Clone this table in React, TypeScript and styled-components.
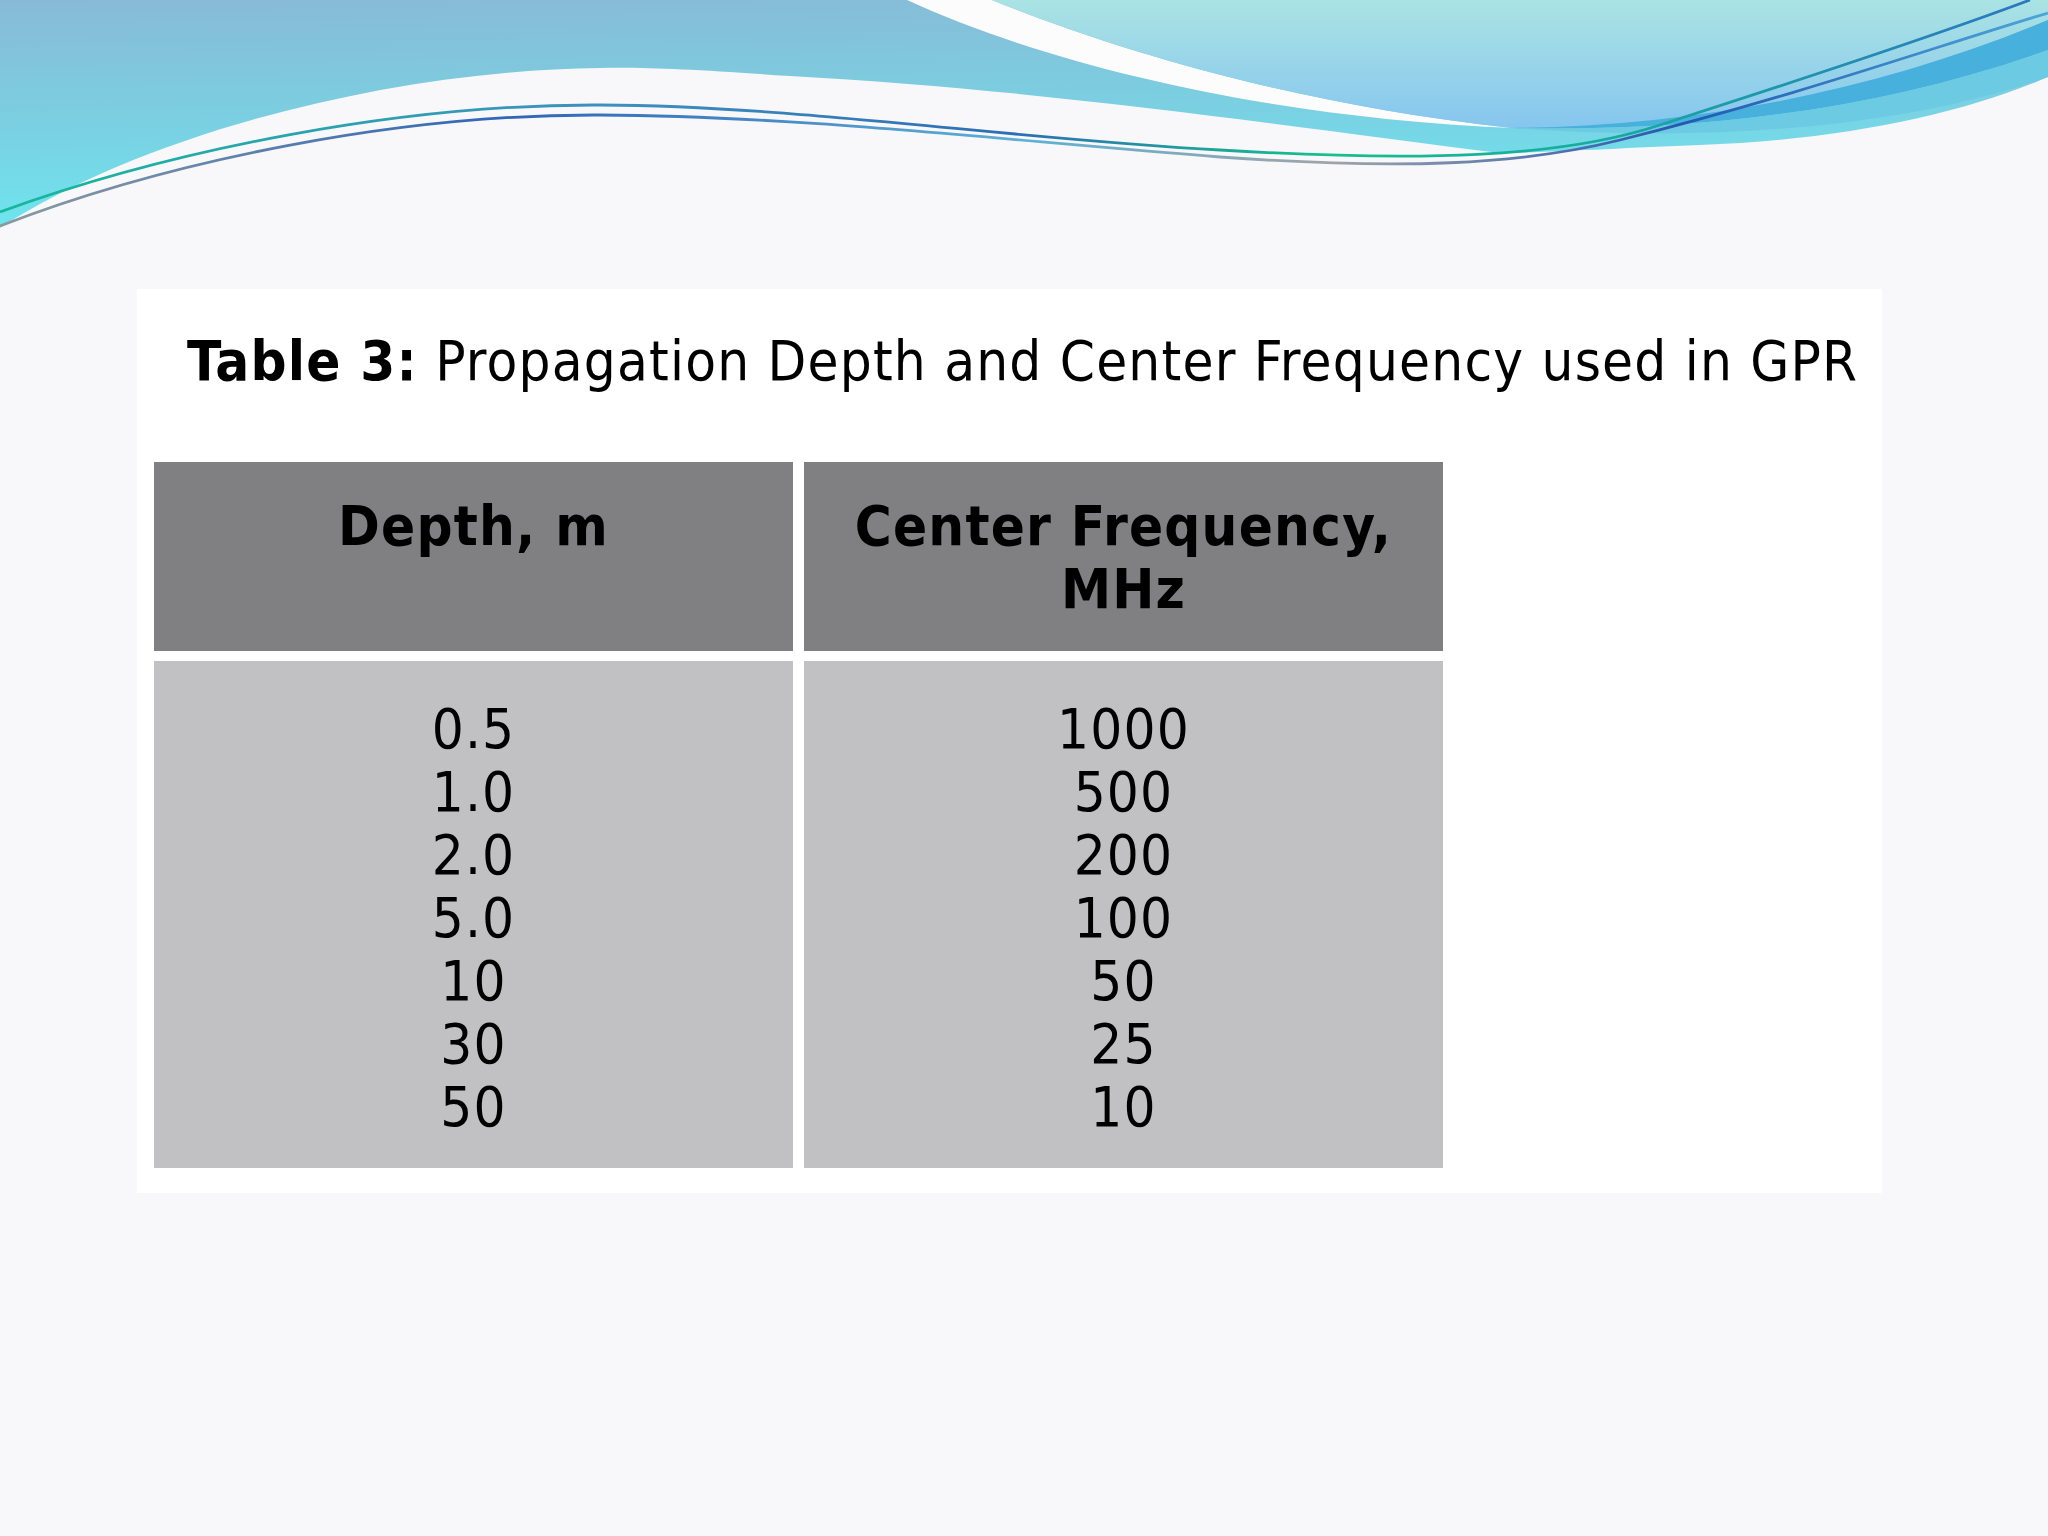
import styled, { createGlobalStyle } from "styled-components";

const GlobalStyle = createGlobalStyle`
  html, body {
    margin: 0;
    padding: 0;
    background: #f8f7fa;
  }
`;

const depths = ["0.5", "1.0", "2.0", "5.0", "10", "30", "50"];
const freqs = ["1000", "500", "200", "100", "50", "25", "10"];

const Slide = styled.div`
  width: 2048px;
  height: 1536px;
  display: flex;
  flex-direction: column;
  overflow: hidden;
  background: #f8f7fa;
  font-family: "DejaVu Sans Condensed", "DejaVu Sans", sans-serif;
  font-stretch: semi-condensed;
  letter-spacing: 1.2px;
  color: #000;
`;

const WaveArt = styled.svg`
  display: block;
  width: 2048px;
  height: 240px;
  flex: none;
`;

const Panel = styled.section`
  box-sizing: border-box;
  width: 1745px;
  height: 904px;
  margin: 49px 0 0 137px;
  padding: 40px 0 0 17px;
  background: #ffffff;
`;

const Caption = styled.h2`
  margin: 0 0 70px 33px;
  font-size: 56px;
  line-height: 63px;
  font-weight: normal;
  white-space: nowrap;
  b {
    font-weight: bold;
  }
`;

const Grid = styled.div`
  display: grid;
  grid-template-columns: 639px 639px;
  column-gap: 11px;
  row-gap: 10px;
`;

const Cell = styled.div<{ head?: boolean }>`
  box-sizing: border-box;
  padding: ${({ head }) => (head ? "32px 20px 31px" : "36px 20px 30px")};
  background: ${({ head }) => (head ? "#807f81" : "#c1c0c2")};
  font-size: 56px;
  line-height: 63px;
  font-weight: ${({ head }) => (head ? "bold" : "normal")};
  text-align: center;
`;

const Line = styled.div``;

const Wave = () => (
  <WaveArt viewBox="0 0 2048 240" preserveAspectRatio="none">
    <defs>
      <linearGradient id="bigBlue" x1="0" y1="0" x2="0.15" y2="1">
        <stop offset="0" stopColor="#88bad6" />
        <stop offset="0.55" stopColor="#7ad0e2" />
        <stop offset="1" stopColor="#6ee6ef" />
      </linearGradient>
      <linearGradient id="paleBlue" x1="0" y1="0" x2="0" y2="1">
        <stop offset="0" stopColor="#aae3e3" />
        <stop offset="1" stopColor="#86c6ef" />
      </linearGradient>
      <linearGradient id="lineA" x1="0" y1="0" x2="1" y2="0">
        <stop offset="0" stopColor="#14b89c" />
        <stop offset="0.3" stopColor="#3f8fc0" />
        <stop offset="0.5" stopColor="#2c6fb4" />
        <stop offset="0.65" stopColor="#16c08e" />
        <stop offset="0.8" stopColor="#18a8a0" />
        <stop offset="1" stopColor="#2a78c0" />
      </linearGradient>
      <linearGradient id="lineB" x1="0" y1="0" x2="1" y2="0">
        <stop offset="0" stopColor="#8a9aa0" />
        <stop offset="0.25" stopColor="#2f66b8" />
        <stop offset="0.5" stopColor="#5fb0d4" />
        <stop offset="0.65" stopColor="#a0a4a8" />
        <stop offset="0.82" stopColor="#2458b0" />
        <stop offset="1" stopColor="#4aa6d8" />
      </linearGradient>
    </defs>
    <path
      d="M0,0 H2048 V77 C1960,115 1840,140 1700,145 C1620,148 1560,152 1500,153 C1300,128 1050,90 790,76 C700,70 650,67 600,68 C400,70 150,130 0,228 Z"
      fill="url(#bigBlue)"
    />
    <path d="M907,0 H992 C1120,52 1300,105 1512,128 C1280,118 1060,70 907,0 Z" fill="#fcfcfd" />
    <path
      d="M992,0 H2048 V20 C1880,90 1700,126 1512,128 C1300,105 1120,52 992,0 Z"
      fill="url(#paleBlue)"
    />
    <path d="M2048,20 V50 C1880,110 1700,132 1512,128 C1700,126 1880,90 2048,20 Z" fill="#48b0dc" />
    <path d="M2048,50 V77 C1900,130 1700,142 1512,128 C1700,132 1880,110 2048,50 Z" fill="#6ccbe2" />
    <path
      d="M0,212 C170,150 400,104 600,105 C800,106 1000,138 1220,150 C1420,162 1560,158 1660,125 C1800,80 1950,30 2030,0"
      fill="none"
      stroke="url(#lineA)"
      strokeWidth="2.8"
    />
    <path
      d="M0,226 C170,160 400,114 600,115 C800,116 1000,140 1220,157 C1400,170 1520,165 1620,140 C1800,95 1940,45 2048,13"
      fill="none"
      stroke="url(#lineB)"
      strokeWidth="2.8"
    />
  </WaveArt>
);

export default function App() {
  return (
    <Slide>
      <GlobalStyle />
      <Wave />
      <Panel>
        <Caption>
          <b>Table 3:</b> Propagation Depth and Center Frequency used in GPR
        </Caption>
        <Grid>
          <Cell head>Depth, m</Cell>
          <Cell head>
            Center Frequency,
            <br />
            MHz
          </Cell>
          <Cell>
            {depths.map((d) => (
              <Line key={d}>{d}</Line>
            ))}
          </Cell>
          <Cell>
            {freqs.map((f) => (
              <Line key={f}>{f}</Line>
            ))}
          </Cell>
        </Grid>
      </Panel>
    </Slide>
  );
}
